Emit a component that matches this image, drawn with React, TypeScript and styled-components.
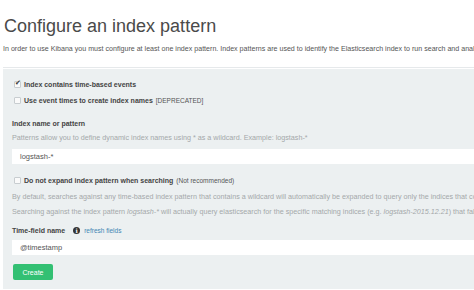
import React from 'react';
import styled, { createGlobalStyle } from 'styled-components';

const GlobalStyle = createGlobalStyle`
    html, body {
        margin: 0;
        padding: 0;
        background: #ffffff;
        overflow: hidden;
    }
    body {
        font-family: "Liberation Sans", Arial, sans-serif;
        color: #444444;
    }
`;

export default function App() {
    return (
        <Page>
            <GlobalStyle />
            <Header>
                <Title>Configure an index pattern</Title>
                <Intro>
                    In order to use Kibana you must configure at least one index pattern. Index patterns are used to identify the Elasticsearch index to run search and analytics against. They are also used to configure fields.
                </Intro>
            </Header>
            <Panel>
                <CheckRow>
                    <Box checked />
                    <Strong>Index contains time-based events</Strong>
                </CheckRow>
                <CheckRow>
                    <Box />
                    <Strong>Use event times to create index names</Strong>
                    <Aside>[DEPRECATED]</Aside>
                </CheckRow>

                <FieldLabel>Index name or pattern</FieldLabel>
                <Help>Patterns allow you to define dynamic index names using * as a wildcard. Example: logstash-*</Help>
                <TextInput $top={7}>logstash-*</TextInput>

                <CheckRow $top={11}>
                    <Box />
                    <Strong>Do not expand index pattern when searching</Strong>
                    <Aside>(Not recommended)</Aside>
                </CheckRow>
                <Help $top={6}>
                    By default, searches against any time-based index pattern that contains a wildcard will automatically be expanded to query only the indices that contain data within the currently selected time range.
                </Help>
                <Help $top={6}>
                    Searching against the index pattern <em>logstash-*</em> will actually query elasticsearch for the specific matching indices (e.g. <em>logstash-2015.12.21</em>) that fall within the current time range.
                </Help>

                <LabelRow>
                    <Strong>Time-field name</Strong>
                    <InfoIcon>i</InfoIcon>
                    <RefreshLink>refresh fields</RefreshLink>
                </LabelRow>
                <TextInput $top={4}>@timestamp</TextInput>

                <CreateButton>Create</CreateButton>
            </Panel>
        </Page>
    );
}

const Page = styled.div`
    width: 640px;
    padding-left: 3px;
`;

const Header = styled.header`
    padding-top: 14px;
    border-bottom: 1px solid #e6e9eb;
    padding-bottom: 13px;
    margin-bottom: 1px;
`;

const Title = styled.h1`
    margin: 0;
    font-size: 18px;
    line-height: 24px;
    font-weight: 400;
    color: #4a4a4a;
    padding-left: 1px;
`;

const Intro = styled.p`
    margin: 6px 0 0;
    font-size: 7.1px;
    line-height: 10px;
    color: #555555;
    white-space: nowrap;
`;

const Panel = styled.section`
    background: #ecf0f1;
    padding: 10px 0 9px 9px;
`;

const CheckRow = styled.label<{ $top?: number }>`
    display: flex;
    align-items: center;
    gap: 3px;
    height: 11px;
    margin-top: ${p => p.$top ?? 5}px;
    white-space: nowrap;
    &:first-child {
        margin-top: 0;
    }
`;

const Box = styled.span<{ checked?: boolean }>`
    width: 5px;
    height: 5px;
    border: 1px solid #c8cdd0;
    border-radius: 1px;
    background: #fafafa;
    position: relative;
    margin-left: 2px;
    &::after {
        content: ${p => (p.checked ? "'✔'" : "''")};
        position: absolute;
        left: 0px;
        top: -3px;
        font-size: 7px;
        color: #333333;
    }
`;

const Strong = styled.span`
    font-weight: 700;
    font-size: 7px;
    color: #444444;
`;

const Aside = styled.span`
    font-size: 6.5px;
    color: #555555;
`;

const FieldLabel = styled.div`
    margin-top: 12px;
    font-weight: 700;
    font-size: 7px;
    line-height: 11px;
    color: #444444;
`;

const Help = styled.p<{ $top?: number }>`
    margin: ${p => p.$top ?? 4}px 0 0;
    font-size: 7.2px;
    line-height: 9px;
    color: #a4a8aa;
    white-space: nowrap;
    em {
        font-style: italic;
    }
`;

const TextInput = styled.div<{ $top: number }>`
    margin-top: ${p => p.$top}px;
    height: 15px;
    background: #ffffff;
    padding-left: 8px;
    display: flex;
    align-items: center;
    font-size: 7.5px;
    color: #555555;
`;

const LabelRow = styled.div`
    display: flex;
    align-items: center;
    gap: 0;
    margin-top: 9px;
    height: 11px;
    white-space: nowrap;
`;

const InfoIcon = styled.span`
    width: 7px;
    height: 7px;
    margin: 0 4px 0 8px;
    border-radius: 50%;
    background: #333333;
    color: #ffffff;
    font-size: 6px;
    font-weight: 700;
    line-height: 7px;
    text-align: center;
    font-family: "DejaVu Serif", serif;
`;

const RefreshLink = styled.a`
    font-size: 6.5px;
    color: #3f86b3;
`;

const CreateButton = styled.button`
    display: block;
    margin-top: 9px;
    margin-left: 1px;
    width: 40px;
    height: 16px;
    padding: 0;
    border: none;
    border-radius: 2px;
    background: #33c073;
    color: #ffffff;
    font-family: "Liberation Sans", Arial, sans-serif;
    font-size: 7px;
`;
